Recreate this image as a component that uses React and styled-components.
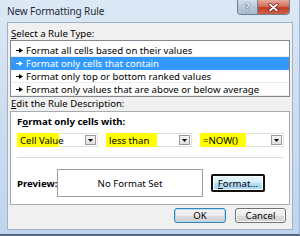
import React from 'react';
import styled, { createGlobalStyle } from 'styled-components';

const Global = createGlobalStyle`
  html, body { margin: 0; padding: 0; background: #5b6b80; }
  body {
    width: 300px; height: 236px; overflow: hidden;
    font-family: "Noto Sans", "Open Sans", sans-serif;
    -webkit-font-smoothing: antialiased;
  }
  * { box-sizing: border-box; }
`;

const Window = styled.div`
  width: 300px;
  height: 235px;
  display: flex;
  flex-direction: column;
  padding: 0 6px 4px 7px;
  background: linear-gradient(180deg, #dce8f5 0%, #cddef0 45%, #bfd5ed 100%);
  border-bottom: 1px solid #50627a;
  border-right: 1px solid #9fb5cf;
`;

const TitleBar = styled.div`
  height: 22px;
  flex: none;
  display: flex;
  align-items: flex-start;
  padding-right: 3px;
`;

const Title = styled.div`
  flex: 1;
  align-self: center;
  font-size: 10px;
  line-height: 12px;
  color: #1e2a38;
  letter-spacing: -0.1px;
`;

const CaptionButtons = styled.div`
  display: flex;
  height: 15px;
  border: 1px solid #6d7f96;
  border-top: none;
  border-radius: 0 0 4px 4px;
  overflow: hidden;
`;

const HelpButton = styled.div`
  width: 20px;
  display: flex;
  align-items: center;
  justify-content: center;
  background: linear-gradient(180deg, #d4dfeb 0%, #b8c8da 50%, #a8bad0 100%);
  border-right: 1px solid #6d7f96;
  font-size: 10px;
  font-weight: bold;
  color: #f4f7fa;
  text-shadow: 0 0 1px #34445a, 0 0 1px #34445a;
`;

const CloseButton = styled.div`
  width: 31px;
  display: flex;
  align-items: center;
  justify-content: center;
  background: linear-gradient(180deg, #e8a99c 0%, #d4715f 45%, #c23a22 55%, #d2604a 100%);
`;

const Client = styled.div`
  flex: 1;
  display: flex;
  flex-direction: column;
  background: #f0f0f0;
  border: 1px solid #9fb2c8;
  padding: 0 2px;
  font-size: 9.6px;
  color: #000;
`;

const GroupLabel = styled.div`
  height: ${p => p.$h}px;
  line-height: ${p => p.$h}px;
  margin-top: ${p => p.$mt || 0}px;
  padding-left: 1px;
  & u { text-decoration: underline; text-underline-offset: 1px; }
`;

const ListBox = styled.div`
  background: #fff;
  border: 1px solid #828790;
  padding-top: 3px;
  display: flex;
  flex-direction: column;
`;

const ListRow = styled.div`
  height: 13px;
  display: flex;
  align-items: center;
  gap: 3px;
  padding-left: 5px;
  background: ${p => (p.$selected ? '#3399ff' : 'transparent')};
  color: ${p => (p.$selected ? '#fff' : '#000')};
  border-bottom: 1px solid ${p => (p.$selected ? '#3399ff' : '#ececec')};
  white-space: nowrap;
`;

const DescBox = styled.div`
  background: #fff;
  border: 1px solid #a7abb0;
  height: 94px;
  padding: 4px 5px 0 6px;
  display: flex;
  flex-direction: column;
`;

const BoldLabel = styled.div`
  font-weight: bold;
  line-height: 12px;
  height: 12px;
  & u { text-decoration: underline; text-underline-offset: 1px; }
`;

const ComboRow = styled.div`
  display: flex;
  gap: 8px;
  margin-top: 5px;
`;

const Combo = styled.div`
  width: ${p => p.$w}px;
  height: 14px;
  display: flex;
  align-items: center;
  border: 1px solid #e0e0e0;
  background: #fff;
  position: relative;
`;

const Highlight = styled.span`
  align-self: stretch;
  width: ${p => p.$w}px;
  background: #ffff00;
  display: flex;
  align-items: center;
  padding-left: 3px;
  margin: -1px 0 -1px -1px;
  white-space: nowrap;
`;

const DropButton = styled.div`
  margin-left: auto;
  margin-right: 1px;
  width: 11px;
  height: 10px;
  border: 1px solid #9a9a9a;
  background: linear-gradient(180deg, #f6f6f6 0%, #dedede 100%);
  display: flex;
  align-items: center;
  justify-content: center;
`;

const Separator = styled.div`
  height: 1px;
  background: #d9d9d9;
  margin: 10px 1px 0 0;
`;

const PreviewRow = styled.div`
  display: flex;
  align-items: center;
  margin-top: 11px;
`;

const PreviewLabel = styled.div`
  font-weight: bold;
  width: 40px;
  flex: none;
`;

const PreviewBox = styled.div`
  width: 146px;
  height: 28px;
  border: 1px solid #a0a0a0;
  display: flex;
  align-items: center;
  justify-content: center;
  background: #fff;
`;

const Button = styled.div`
  width: ${p => p.$w}px;
  height: ${p => p.$h}px;
  display: flex;
  align-items: center;
  justify-content: center;
  border-radius: 3px;
  border: ${p => (p.$focus ? '2px solid #111' : p.$default ? '1px solid #3c7fb1' : '1px solid #707070')};
  background: ${p =>
    p.$focus
      ? 'linear-gradient(180deg, #e6f5fc 0%, #d5eefb 50%, #b6def6 51%, #a7d7f4 100%)'
      : 'linear-gradient(180deg, #f3f3f3 0%, #ebebeb 50%, #dddddd 51%, #cfcfcf 100%)'};
  box-shadow: ${p => (p.$default ? 'inset 0 0 0 1px #a6e0f9' : 'inset 0 0 0 1px #fcfcfc')};
  & u { text-decoration: underline; text-underline-offset: 1px; }
`;

const FormatButton = styled(Button)`
  margin-left: 8px;
  border-radius: 2px;
`;

const Footer = styled.div`
  display: flex;
  justify-content: flex-end;
  gap: 9px;
  margin-top: 3px;
  padding-right: 4px;
`;

const RowArrow = ({ color }) => (
  <svg width="7" height="5" viewBox="0 0 7 5">
    <rect x="0" y="2" width="4" height="1" fill={color} />
    <polygon points="3,0 7,2.5 3,5" fill={color} />
  </svg>
);

const DownTri = () => (
  <svg width="5" height="3" viewBox="0 0 5 3">
    <polygon points="0,0 5,0 2.5,3" fill="#000" />
  </svg>
);

const CloseX = () => (
  <svg width="11" height="9" viewBox="0 0 11 9">
    <path d="M2 1.5 L9 7.5 M9 1.5 L2 7.5" stroke="#6a1a10" strokeWidth="3.2" strokeLinecap="round" />
    <path d="M2 1.5 L9 7.5 M9 1.5 L2 7.5" stroke="#ffffff" strokeWidth="1.8" strokeLinecap="round" />
  </svg>
);

const rules = [
  'Format all cells based on their values',
  'Format only cells that contain',
  'Format only top or bottom ranked values',
  'Format only values that are above or below average',
];

export default function App() {
  return (
    <>
      <Global />
      <Window>
        <TitleBar>
          <Title>New Formatting Rule</Title>
          <CaptionButtons>
            <HelpButton>?</HelpButton>
            <CloseButton><CloseX /></CloseButton>
          </CaptionButtons>
        </TitleBar>
        <Client>
          <GroupLabel $h={13} $mt={4}><u>S</u>elect a Rule Type:</GroupLabel>
          <ListBox>
            {rules.map((r, i) => (
              <ListRow key={r} $selected={i === 1}>
                <RowArrow color={i === 1 ? '#fff' : '#000'} />
                {r}
              </ListRow>
            ))}
          </ListBox>
          <GroupLabel $h={14}><u>E</u>dit the Rule Description:</GroupLabel>
          <DescBox>
            <BoldLabel>F<u>o</u>rmat only cells with:</BoldLabel>
            <ComboRow>
              <Combo $w={82}>
                <Highlight $w={42}>Cell Value</Highlight>
                <DropButton><DownTri /></DropButton>
              </Combo>
              <Combo $w={87}>
                <Highlight $w={51}>less than</Highlight>
                <DropButton><DownTri /></DropButton>
              </Combo>
              <Combo $w={85}>
                <Highlight $w={46}>=NOW()</Highlight>
                <DropButton><DownTri /></DropButton>
              </Combo>
            </ComboRow>
            <Separator />
            <PreviewRow>
              <PreviewLabel>Preview:</PreviewLabel>
              <PreviewBox>No Format Set</PreviewBox>
              <FormatButton $w={54} $h={18} $focus><u>F</u>ormat...</FormatButton>
            </PreviewRow>
          </DescBox>
          <Footer>
            <Button $w={52} $h={15} $default>OK</Button>
            <Button $w={51} $h={15}>Cancel</Button>
          </Footer>
        </Client>
      </Window>
    </>
  );
}
